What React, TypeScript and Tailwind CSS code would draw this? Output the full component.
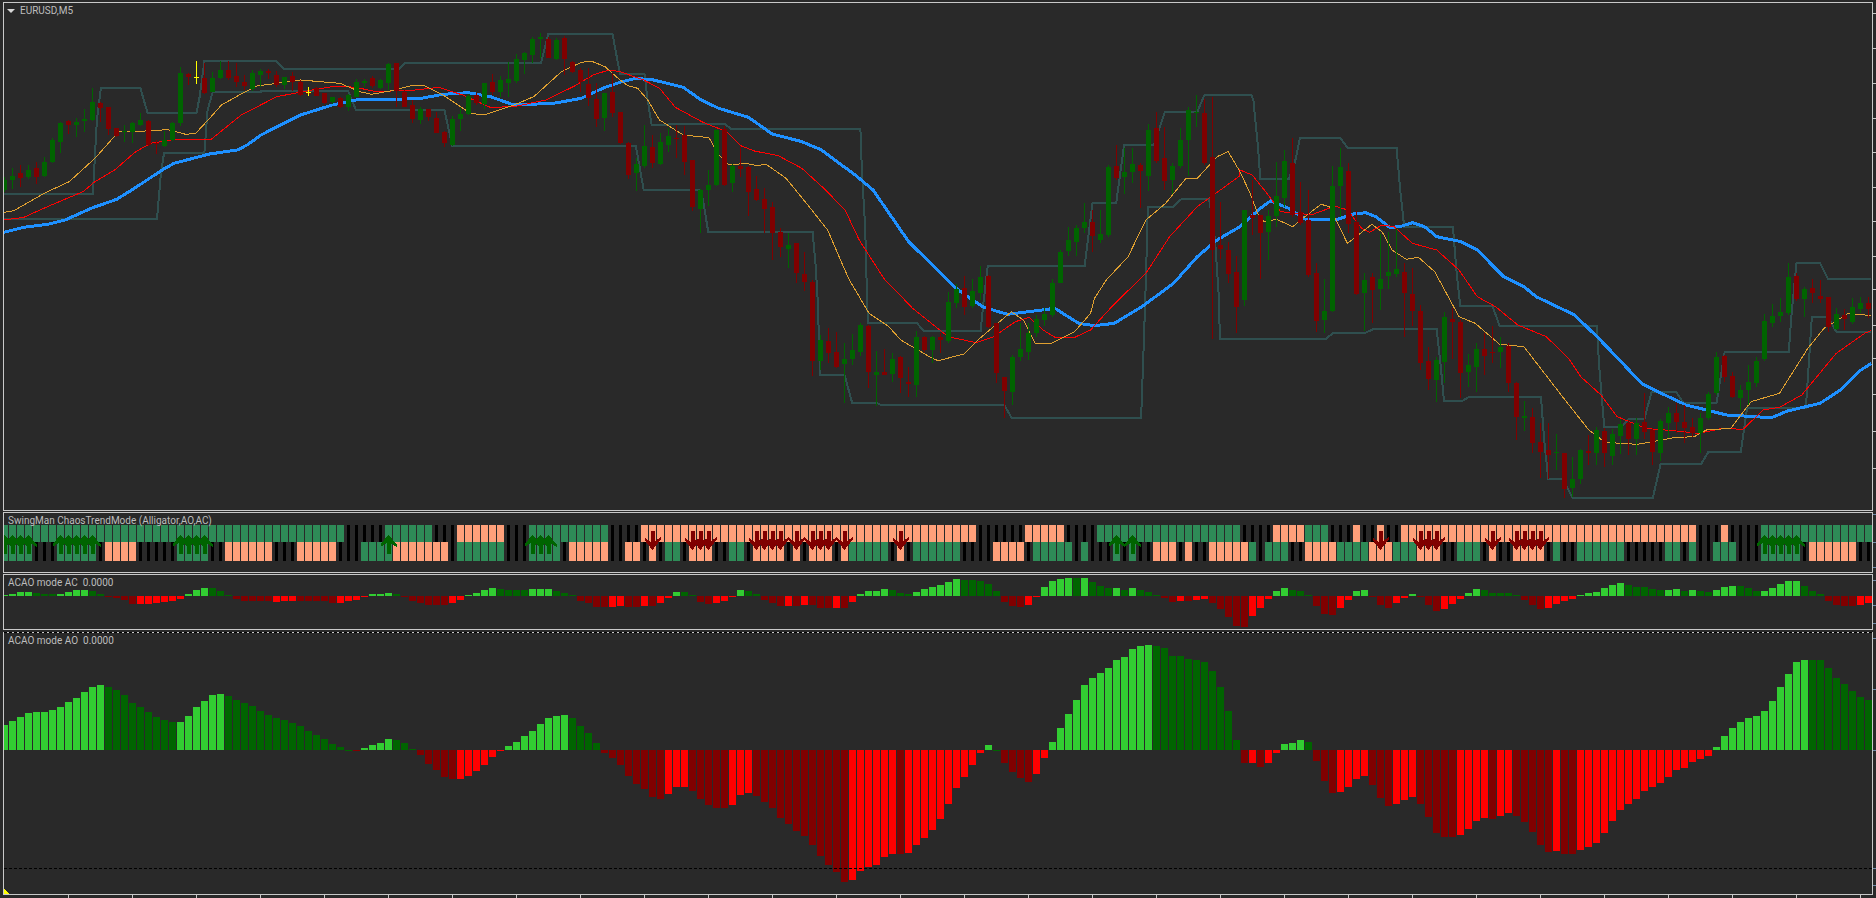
import type { ReactNode } from 'react';

type Pt = [number, number];

const COLORS: Record<string, string> = {
  L: '#32cd32',
  D: '#006400',
  R: '#ff0000',
  M: '#800000',
  G: '#006400',
  g: '#2e8b57',
  s: '#ffa07a',
  k: '#000000',
};

// Zoomed chart points back to page pixels (y values are page y * 3)
const mapA = (pts: Pt[]) => pts.map(([x, y]) => `${x * 0.3954},${y / 3}`);
const mapB = (pts: Pt[]) => pts.map(([x, y]) => `${620 + x * 0.3954},${y / 3}`);
const mapC = (pts: Pt[]) => pts.map(([x, y]) => `${1240 + x * 0.4056},${(y + 300) / 3}`);
const line = (a: Pt[], b: Pt[], c: Pt[]) => [...mapA(a), ...mapB(b), ...mapC(c)].join(' ');

const channelUpper = line(
  [[10, 581], [235, 581], [240, 470], [245, 360], [255, 264], [355, 264], [373, 338], [497, 338], [505, 290], [517, 183], [698, 183], [718, 207], [1010, 207], [1025, 189], [1368, 189], [1387, 101], [1549, 101]],
  [[0, 223], [62, 223], [70, 300], [80, 375], [165, 372], [265, 372], [280, 386], [608, 386], [612, 520], [620, 680], [625, 900], [627, 968], [750, 968], [768, 993], [912, 993], [920, 900], [930, 798], [1175, 798], [1195, 608], [1255, 608], [1275, 435], [1350, 435], [1378, 336], [1460, 336], [1478, 285], [1568, 285]],
  [[28, -15], [33, 0], [45, 150], [50, 237], [120, 237], [135, 190], [148, 113], [247, 113], [265, 143], [386, 143], [395, 270], [405, 382], [525, 382], [535, 530], [543, 617], [622, 617], [640, 677], [880, 677], [885, 790], [898, 980], [940, 980], [958, 957], [997, 957], [1015, 875], [1075, 875], [1093, 908], [1175, 908], [1195, 755], [1353, 755], [1360, 640], [1372, 489], [1430, 489], [1450, 537], [1556, 537]],
);

const channelLower = line(
  [[10, 657], [397, 657], [407, 520], [415, 458], [517, 458], [525, 330], [538, 276], [660, 276], [660, 272], [880, 272], [890, 300], [900, 330], [1124, 330], [1135, 390], [1144, 437]],
  [[0, 437], [40, 437], [60, 570], [200, 570], [210, 600], [223, 695], [487, 695], [495, 800], [500, 900], [505, 1080], [505, 1125], [568, 1125], [587, 1208], [648, 1208], [660, 1215], [972, 1215], [990, 1253], [1318, 1253], [1325, 1020], [1330, 840], [1335, 620], [1400, 620], [1420, 597], [1490, 597], [1505, 720], [1515, 900], [1517, 1018], [1568, 1018]],
  [[0, 717], [212, 717], [230, 698], [310, 698], [328, 688], [485, 688], [495, 800], [503, 903], [548, 903], [566, 890], [742, 890], [750, 1020], [760, 1137], [795, 1137], [820, 1193], [1018, 1193], [1037, 1092], [1137, 1092], [1155, 1055], [1235, 1055], [1250, 925], [1395, 925], [1410, 650], [1450, 650], [1470, 695], [1556, 695]],
);

const maBlue = line(
  [[10, 697], [60, 682], [120, 673], [165, 660], [230, 625], [295, 598], [340, 565], [410, 510], [440, 490], [530, 462], [600, 450], [625, 435], [660, 405], [760, 345], [840, 315], [900, 300], [1060, 296], [1120, 283], [1185, 278], [1240, 290], [1300, 315], [1400, 310], [1470, 295], [1530, 262]],
  [[0, 247], [40, 235], [85, 240], [160, 262], [205, 300], [250, 325], [325, 352], [385, 402], [460, 425], [510, 450], [600, 530], [640, 570], [730, 725], [850, 865], [880, 890], [920, 922], [980, 943], [1100, 925], [1160, 970], [1200, 977], [1250, 970], [1320, 920], [1400, 850], [1460, 770], [1510, 720], [1568, 680]],
  [[50, 325], [75, 303], [120, 325], [160, 357], [235, 360], [280, 342], [310, 338], [335, 350], [370, 383], [400, 378], [425, 368], [455, 380], [485, 410], [545, 425], [585, 450], [650, 530], [700, 560], [730, 590], [825, 645], [880, 710], [920, 760], [990, 850], [1030, 875], [1100, 915], [1200, 945], [1310, 953], [1350, 933], [1430, 910], [1480, 870], [1525, 815], [1556, 790]],
);

const maRed = line(
  [[10, 660], [60, 652], [120, 620], [210, 575], [240, 545], [290, 510], [340, 458], [380, 430], [450, 417], [535, 417], [610, 345], [700, 290], [780, 272], [850, 258], [900, 262], [950, 275], [1050, 270], [1110, 262], [1170, 285], [1240, 322], [1300, 320], [1380, 300], [1450, 260], [1500, 225], [1540, 210]],
  [[0, 215], [60, 240], [100, 265], [140, 322], [210, 367], [270, 395], [305, 437], [340, 453], [400, 467], [460, 505], [520, 570], [570, 632], [605, 720], [670, 840], [700, 875], [740, 925], [830, 1010], [900, 1028], [945, 1010], [1000, 965], [1035, 952], [1070, 990], [1100, 1012], [1150, 1012], [1190, 990], [1240, 925], [1265, 895], [1330, 820], [1390, 710], [1460, 620], [1530, 560], [1568, 527]],
  [[0, 210], [30, 225], [60, 270], [100, 335], [145, 340], [175, 345], [235, 318], [265, 330], [300, 385], [320, 397], [350, 375], [380, 380], [425, 430], [485, 450], [540, 510], [585, 590], [630, 620], [685, 675], [755, 710], [810, 775], [840, 830], [890, 885], [930, 950], [1000, 985], [1075, 993], [1130, 1000], [1190, 985], [1240, 988], [1290, 930], [1330, 922], [1385, 885], [1470, 760], [1540, 700], [1556, 692]],
);

const maOrange = line(
  [[10, 637], [35, 632], [115, 578], [175, 545], [240, 475], [300, 395], [400, 392], [420, 388], [470, 403], [495, 400], [530, 355], [560, 315], [610, 282], [650, 258], [700, 250], [760, 240], [860, 250], [910, 275], [940, 283], [990, 272], [1040, 257], [1075, 258], [1120, 285], [1190, 340], [1225, 345], [1300, 315], [1350, 290], [1420, 215], [1470, 187], [1495, 183], [1530, 200]],
  [[0, 240], [20, 257], [45, 265], [70, 300], [100, 360], [160, 405], [225, 413], [250, 465], [275, 495], [320, 490], [345, 497], [370, 493], [420, 535], [475, 615], [525, 690], [565, 800], [580, 840], [630, 940], [680, 980], [710, 1020], [790, 1075], [805, 1082], [870, 1062], [910, 1015], [990, 935], [1020, 960], [1050, 1030], [1090, 1030], [1150, 995], [1190, 940], [1200, 895], [1230, 840], [1285, 770], [1330, 660], [1380, 610], [1430, 537], [1460, 535], [1510, 470], [1538, 455], [1568, 515]],
  [[25, 280], [45, 345], [60, 365], [90, 358], [130, 380], [160, 350], [200, 313], [220, 320], [265, 430], [325, 373], [350, 395], [375, 450], [410, 478], [440, 472], [480, 515], [540, 650], [580, 670], [640, 733], [700, 740], [795, 890], [860, 990], [900, 1027], [980, 1033], [1070, 1013], [1120, 1010], [1150, 990], [1210, 985], [1260, 905], [1330, 880], [1400, 745], [1440, 685], [1500, 640], [1556, 647]],
);

// colour, body top, body bottom, wick top, wick bottom (page y * 3)
const candles: [string, number, number, number, number][] = [
  ['G', 540, 570, 530, 575], ['G', 528, 540, 505, 568], ['M', 520, 535, 495, 560], ['G', 510, 532, 495, 537],
  ['M', 503, 532, 485, 552], ['G', 487, 528, 470, 530], ['G', 420, 485, 415, 490], ['G', 370, 425, 365, 460],
  ['M', 362, 375, 360, 403], ['G', 366, 375, 355, 410], ['G', 357, 362, 327, 395], ['G', 306, 360, 265, 362],
  ['M', 310, 323, 305, 365], ['M', 322, 388, 322, 405], ['M', 385, 408, 383, 412], ['G', 393, 396, 375, 425],
  ['G', 370, 395, 365, 430], ['G', 360, 375, 340, 378], ['M', 362, 435, 360, 438], ['M', 430, 433, 420, 462],
  ['G', 420, 437, 392, 440], ['G', 370, 420, 365, 422], ['G', 220, 370, 200, 378], ['M', 222, 232, 218, 255],
  ['M', 232, 234, 232, 234], ['M', 235, 280, 190, 282], ['G', 235, 275, 215, 277], ['G', 210, 235, 183, 238],
  ['M', 210, 235, 183, 240], ['M', 227, 245, 190, 262], ['M', 245, 258, 225, 270], ['G', 220, 268, 210, 272],
  ['G', 213, 225, 208, 262], ['M', 214, 218, 208, 238], ['M', 225, 255, 212, 260], ['G', 232, 255, 230, 268],
  ['M', 228, 245, 215, 272], ['M', 245, 285, 240, 288], ['M', 278, 280, 278, 280], ['M', 265, 288, 262, 288],
  ['M', 280, 310, 280, 312], ['G', 292, 305, 290, 312], ['M', 295, 320, 292, 325], ['G', 285, 320, 283, 332],
  ['G', 245, 290, 237, 292], ['G', 243, 249, 238, 262], ['M', 235, 257, 228, 265], ['G', 240, 265, 238, 268],
  ['G', 192, 248, 188, 270], ['M', 190, 272, 188, 320], ['M', 275, 320, 270, 322], ['M', 316, 358, 300, 370],
  ['G', 328, 360, 322, 372], ['M', 328, 352, 326, 362], ['M', 355, 398, 335, 400], ['M', 395, 430, 392, 440],
  ['G', 358, 435, 348, 438], ['G', 342, 358, 325, 392], ['G', 288, 342, 282, 345], ['M', 285, 310, 280, 315],
  ['G', 250, 312, 248, 328], ['M', 245, 275, 222, 285], ['G', 240, 275, 228, 292], ['G', 238, 248, 185, 290],
  ['G', 178, 243, 162, 248], ['G', 158, 180, 155, 222], ['G', 118, 165, 112, 190], ['G', 110, 116, 100, 175],
  ['M', 118, 173, 112, 175], ['G', 120, 177, 115, 180], ['M', 115, 177, 108, 225], ['M', 185, 215, 183, 218],
  ['M', 210, 245, 205, 275], ['M', 252, 295, 203, 318], ['M', 297, 357, 248, 382], ['G', 280, 353, 278, 392],
  ['M', 277, 340, 220, 352], ['M', 335, 430, 335, 432], ['M', 430, 525, 425, 538], ['G', 492, 518, 475, 572],
  ['G', 438, 497, 375, 505], ['M', 442, 490, 405, 505], ['G', 426, 492, 400, 495], ['G', 407, 435, 385, 455],
  ['M', 413, 417, 375, 475], ['M', 406, 485, 378, 525], ['M', 480, 620, 480, 632], ['G', 570, 627, 568, 700],
  ['G', 556, 570, 510, 618], ['G', 390, 555, 388, 558], ['M', 388, 555, 378, 558], ['G', 497, 548, 492, 575],
  ['M', 498, 507, 440, 530], ['M', 500, 575, 498, 648], ['M', 568, 600, 528, 602], ['M', 598, 628, 565, 698],
  ['M', 622, 700, 605, 780], ['M', 697, 742, 685, 770], ['G', 735, 747, 700, 805], ['M', 730, 820, 728, 848],
  ['M', 822, 845, 755, 872], ['M', 845, 1083, 840, 1128], ['G', 1020, 1083, 1005, 1110], ['M', 1023, 1060, 985, 1090],
  ['M', 1055, 1100, 995, 1105], ['G', 1077, 1092, 1030, 1210], ['G', 1050, 1077, 1003, 1095], ['G', 975, 1055, 970, 1068],
  ['M', 978, 1115, 975, 1165], ['G', 1117, 1125, 1053, 1218], ['M', 1115, 1125, 1048, 1125], ['G', 1077, 1122, 1060, 1145],
  ['M', 1072, 1135, 1068, 1180], ['M', 1145, 1152, 1102, 1190], ['G', 1012, 1155, 993, 1190], ['M', 1010, 1050, 1008, 1055],
  ['G', 1010, 1050, 1008, 1088], ['M', 1012, 1020, 1000, 1060], ['G', 906, 1022, 876, 1030], ['G', 868, 910, 853, 925],
  ['M', 865, 920, 828, 945], ['G', 872, 918, 838, 925], ['G', 832, 880, 798, 900], ['M', 828, 980, 825, 985],
  ['M', 970, 1120, 970, 1150], ['M', 1132, 1172, 1130, 1255], ['G', 1072, 1175, 1065, 1215], ['G', 1048, 1070, 970, 1082],
  ['G', 1000, 1055, 968, 1080], ['G', 958, 1000, 945, 1010], ['G', 942, 960, 925, 978], ['G', 850, 945, 838, 950],
  ['G', 755, 850, 750, 842], ['G', 720, 752, 680, 768], ['G', 683, 725, 675, 768], ['G', 666, 683, 610, 700],
  ['M', 666, 707, 630, 757], ['G', 702, 720, 630, 730], ['G', 500, 705, 495, 710], ['M', 498, 535, 435, 540],
  ['G', 516, 530, 445, 582], ['G', 492, 515, 445, 548], ['M', 496, 514, 490, 625], ['G', 390, 527, 372, 572],
  ['M', 383, 484, 335, 490], ['M', 474, 543, 380, 570], ['G', 498, 540, 490, 583], ['G', 420, 498, 385, 505],
  ['G', 330, 420, 322, 528], ['G', 335, 338, 285, 380], ['M', 340, 490, 298, 495], ['M', 472, 750, 290, 1018],
  ['M', 735, 747, 605, 778], ['M', 750, 822, 725, 850], ['M', 815, 920, 768, 1000],
  ['G', 630, 900, 630, 917], ['M', 645, 655, 540, 705], ['M', 645, 700, 645, 838], ['G', 648, 695, 630, 780],
  ['G', 588, 648, 485, 680], ['G', 483, 593, 450, 620], ['M', 490, 645, 413, 652], ['M', 635, 670, 545, 675],
  ['M', 660, 825, 570, 830], ['M', 820, 962, 788, 995], ['G', 932, 960, 838, 1000], ['G', 558, 932, 498, 935],
  ['G', 502, 558, 445, 650], ['M', 512, 672, 490, 700], ['M', 665, 882, 632, 885], ['G', 840, 878, 820, 992],
  ['M', 832, 870, 818, 970], ['G', 838, 867, 703, 930], ['G', 816, 827, 695, 868], ['G', 807, 822, 685, 832],
  ['M', 815, 878, 790, 1010], ['M', 882, 932, 805, 978], ['M', 932, 1088, 915, 1110], ['M', 1082, 1138, 1042, 1170],
  ['G', 1080, 1140, 1070, 1205], ['G', 950, 1085, 935, 1148], ['M', 957, 965, 925, 1078], ['M', 965, 1120, 960, 1195],
  ['G', 1095, 1115, 1062, 1162], ['G', 1048, 1100, 1030, 1175], ['M', 1048, 1068, 998, 1125], ['M', 1055, 1060, 978, 1090],
  ['G', 1040, 1055, 1012, 1105], ['M', 1038, 1150, 1030, 1175], ['M', 1150, 1250, 1145, 1320], ['G', 1248, 1253, 1202, 1292],
  ['M', 1250, 1330, 1225, 1358], ['M', 1325, 1355, 1268, 1435], ['M', 1350, 1365, 1268, 1438], ['G', 1356, 1360, 1302, 1410],
  ['M', 1360, 1467, 1360, 1495], ['G', 1437, 1463, 1372, 1490], ['G', 1350, 1437, 1348, 1453], ['M', 1353, 1358, 1305, 1395],
  ['G', 1290, 1358, 1282, 1395], ['M', 1293, 1360, 1285, 1400], ['G', 1302, 1367, 1288, 1395], ['G', 1273, 1307, 1258, 1362],
  ['M', 1268, 1318, 1260, 1365], ['G', 1268, 1318, 1255, 1365], ['M', 1265, 1295, 1178, 1318], ['M', 1290, 1355, 1285, 1395],
  ['G', 1263, 1358, 1258, 1382], ['G', 1238, 1268, 1220, 1315], ['M', 1240, 1265, 1210, 1300], ['M', 1265, 1285, 1215, 1330],
  ['M', 1280, 1300, 1255, 1310], ['G', 1254, 1300, 1238, 1358], ['G', 1182, 1255, 1175, 1260], ['G', 1070, 1180, 1055, 1185],
  ['M', 1068, 1132, 1065, 1145], ['M', 1128, 1190, 1115, 1193], ['G', 1170, 1193, 1155, 1230], ['G', 1147, 1170, 1095, 1215],
  ['G', 1083, 1150, 1070, 1162], ['G', 963, 1076, 943, 1082], ['G', 948, 968, 912, 980], ['G', 936, 948, 895, 965],
  ['G', 832, 940, 790, 945], ['M', 827, 898, 820, 902], ['G', 868, 897, 860, 952], ['M', 863, 880, 838, 910],
  ['M', 887, 897, 840, 910], ['M', 892, 980, 890, 995], ['G', 942, 986, 925, 990], ['M', 944, 958, 928, 990],
  ['G', 922, 965, 895, 972], ['G', 910, 927, 890, 940], ['M', 910, 927, 890, 955],
];

// one entry per bar: colour letter + height in 3x pixels, negative is below the zero line
const acBars = 'L2 L6 L12 L12 D9 D7 D6 L6 L12 L18 L18 D15 D6 M-2 M-6 M-12 M-23 R-23 R-24 R-20 R-18 R-14 R-8 L6 L18 L24 D24 D15 D2 M-8 M-16 M-16 M-16 M-16 R-17 R-16 R-16 M-16 M-16 M-16 M-16 M-20 R-20 R-16 R-12 R-3 L6 L6 L9 D5 M-3 M-15 M-22 M-27 M-28 M-28 R-22 R-12 L2 L9 L18 L24 D22 D18 D18 D18 L21 L21 L21 D15 D9 D2 M-15 M-22 M-33 M-33 R-33 R-30 M-33 M-33 R-30 M-30 R-21 R-6 L12 D12 D1 M-18 M-24 R-21 R-15 R-2 L18 D15 D6 M-12 M-21 M-30 R-30 M-30 R-27 M-27 M-36 M-36 R-36 M-36 R-18 L6 L15 L15 L21 D18 D9 D6 L12 L21 L27 L33 L42 L51 D48 D48 D45 D36 D15 M-18 M-30 M-33 R-27 R-3 L27 L45 L51 L54 D54 L54 D42 D30 D24 L24 D18 L24 D18 D12 D2 M-6 M-18 R-15 M-15 R-12 R-9 M-21 M-39 M-63 M-90 M-93 R-60 R-36 R-9 L15 L24 D18 D15 D1 M-30 M-54 M-57 R-36 R-12 L15 L18 M-3 M-27 M-36 R-21 R-5 L6 M-3 M-27 M-45 R-39 R-24 R-9 L9 L21 D18 D9 D9 D9 D1 M-12 M-27 M-39 R-36 R-24 R-15 R-9 L3 L9 L12 L24 L33 L39 D33 D27 D27 D21 D18 L18 L21 D15 L18 D15 D12 L18 L27 L30 D30 D24 D15 L15 L24 L36 L45 L45 D30 D15 D6 M-15 M-27 M-30 M-30 R-27 R-21'.split(' ');

const aoBars = 'L75 L87 L99 L111 L114 L114 L120 L129 L144 L156 L174 L189 L195 D189 D180 D165 D141 D129 D114 D99 D90 D84 L84 L102 L129 L147 L165 L168 D162 D150 D141 D132 D117 D105 D96 D90 D81 D72 D57 D45 D33 D18 D9 D-2 M-2 L6 L15 L21 L33 D30 D21 D2 M-15 M-42 M-60 M-81 M-87 R-87 R-78 R-63 R-45 R-21 R-3 L12 L24 L42 L57 L78 L96 L102 L105 D96 D72 D51 D21 M-9 M-24 M-45 M-78 M-102 M-117 M-141 M-147 R-132 R-111 R-111 M-123 M-147 M-165 M-173 M-173 R-165 R-135 R-129 M-138 M-156 M-173 M-203 M-222 M-243 M-258 M-285 M-318 M-345 M-365 M-395 R-390 R-363 R-351 R-345 R-321 R-312 M-312 R-309 R-285 R-264 R-240 R-207 R-162 R-114 R-81 R-45 R-9 L15 D-2 M-39 M-66 M-84 M-96 R-72 R-24 L24 L66 L108 L150 L195 L216 L231 L246 L270 L279 L303 L312 L315 D312 D306 D282 D282 D273 D270 D264 D237 D189 D117 D30 M-39 R-39 M-51 R-39 R-9 L18 L21 L30 D24 M-33 M-93 M-129 R-126 R-111 R-87 R-78 M-105 M-143 M-168 R-162 R-150 R-141 M-162 M-201 M-249 M-261 M-261 R-255 R-237 R-213 R-204 M-207 R-198 R-189 M-198 M-215 M-246 M-285 M-305 R-303 M-311 M-311 R-300 R-291 R-279 R-249 R-213 R-180 R-162 R-147 R-123 R-111 R-99 R-81 R-60 R-54 R-36 R-27 R-18 L9 L42 L66 L84 L96 L102 L117 L147 L189 L228 L264 L270 D270 D270 D246 D216 D198 D177 D159 D150'.split(' ');

// swing mode rows as runs of colour letter + bar count
const swingTop = 'g43 k5 g6 k3 s6 k3 g10 k4 s42 k6 s5 k4 g18 k4 s4 g3 k3 s1 k2 s1 k2 s37 k3 s1 k4 g14';
const swingBottom = 'g4 k3 g5 k1 s4 k5 g4 k2 s6 k3 s5 k3 g4 s7 k1 g6 k3 g4 k1 s5 k2 s2 k1 s1 k1 g2 k1 s3 k2 g2 k1 s4 k1 s1 k1 s3 k1 s1 g5 k1 s1 k1 g6 k4 s4 k1 g5 k1 g1 k3 g1 k1 g1 k2 s3 k1 s1 k2 s5 g1 k1 g3 k2 s4 g4 s3 g3 s3 k2 g3 k1 s1 k2 s4 k1 g1 k2 g6 k5 g2 k1 g1 k2 g3 k3 g5 k1 s6 k2';

const expandRuns = (runs: string) =>
  runs.split(' ').flatMap((r) => Array<string>(Number(r.slice(1))).fill(r[0]));

const upArrows = [0, 1, 2, 3, 7, 8, 9, 10, 11, 22, 23, 24, 25, 48, 66, 67, 68, 139, 141, 220, 221, 222, 223, 224];
const downArrows = [81, 86, 87, 88, 94, 95, 96, 97, 99, 101, 102, 103, 105, 112, 172, 177, 178, 179, 186, 189, 190, 191, 192];

const priceTicks = [13, 48, 83, 118, 152, 187, 221, 256, 289, 325, 358, 394, 431, 468, 514, 542, 567, 580, 605, 623, 638, 689, 750, 868, 885];
const timeTicks = Array.from({ length: 29 }, (_, i) => i);

const barX = (i: number) => 1 + 8 * i;
const centerX = (i: number) => 4.5 + 8 * i;

function Pane({
  top,
  height,
  label,
  dashedTop,
  children,
}: {
  top: number;
  height: number;
  label: ReactNode;
  dashedTop?: boolean;
  children: ReactNode;
}) {
  return (
    <div className="relative border border-[#c8c8c8]" style={{ height: height + 2 }}>
      {dashedTop && (
        <div className="absolute inset-x-0 -top-px h-px bg-[repeating-linear-gradient(90deg,#000_0_3px,#c8c8c8_3px_5px)]" />
      )}
      <svg className="block" width={1868} height={height} viewBox={`4 ${top} 1868 ${height}`} shapeRendering="crispEdges">
        {children}
      </svg>
      <div className="absolute left-[3px] top-0 flex h-[15px] items-center gap-[5px] text-[10px] leading-none text-[#bdbdbd]">
        {label}
      </div>
    </div>
  );
}

function Histogram({ bars, zero }: { bars: string[]; zero: number }) {
  return (
    <>
      {bars.map((b, i) => {
        const v = Number(b.slice(1)) / 3;
        const h = Math.max(Math.abs(v), 1);
        return <rect key={i} x={barX(i)} y={v > 0 ? zero - h : zero} width={7} height={h} fill={COLORS[b[0]]} />;
      })}
    </>
  );
}

function SwingRow({ states, y, h }: { states: string[]; y: number; h: number }) {
  return (
    <>
      {states.map((s, i) => (
        <rect
          key={i}
          x={s === 'k' ? barX(i) + 2 : barX(i)}
          y={y}
          width={s === 'k' ? 3 : 7}
          height={h}
          fill={COLORS[s]}
        />
      ))}
    </>
  );
}

function Candles() {
  return (
    <>
      {candles.map(([c, top, bottom, high, low], i) => {
        const y = Math.round(top / 3);
        const by = Math.max(Math.round(bottom / 3) - y, 1);
        const hy = Math.round(high / 3);
        return (
          <g key={i} fill={COLORS[c]}>
            <rect x={4 + 8 * i} y={hy} width={1} height={Math.max(Math.round(low / 3) - hy, 1)} />
            <rect x={2 + 8 * i} y={y} width={5} height={by} />
          </g>
        );
      })}
    </>
  );
}

function Cross({ x, top, bottom, bar }: { x: number; top: number; bottom: number; bar: number }) {
  return (
    <g fill="#ffff00">
      <rect x={x} y={top} width={1} height={bottom - top} />
      <rect x={x - 2} y={bar} width={5} height={1} />
    </g>
  );
}

export default function App() {
  return (
    <div className="flex h-[898px] w-[1876px] overflow-hidden bg-[#292929] pl-[3px] font-['Roboto',sans-serif]">
      <div className="flex w-[1870px] flex-col gap-px pt-[2px]">
        <Pane
          top={3}
          height={507}
          label={
            <>
              <svg width={8} height={4} viewBox="0 0 8 4">
                <path d="M0 0H8L4 4Z" fill="#d8d8d8" />
              </svg>
              <span>EURUSD,M5</span>
            </>
          }
        >
          <polyline points={channelUpper} fill="none" stroke="#2f4f4f" strokeWidth={2} />
          <polyline points={channelLower} fill="none" stroke="#2f4f4f" strokeWidth={2} />
          <polyline points={maBlue} fill="none" stroke="#1e90ff" strokeWidth={3} />
          <polyline points={maRed} fill="none" stroke="#ff0000" strokeWidth={1} />
          <polyline points={maOrange} fill="none" stroke="#e0a030" strokeWidth={1} />
          <Candles />
          <Cross x={196} top={61} bottom={84} bar={77} />
          <Cross x={308} top={87} bottom={96} bar={92} />
        </Pane>

        <Pane top={513} height={59} label={<span className="pl-[1px]">SwingMan ChaosTrendMode (Alligator,AO,AC)</span>}>
          <SwingRow states={expandRuns(swingTop)} y={525} h={17} />
          <SwingRow states={expandRuns(swingBottom)} y={542} h={19} />
          {upArrows.map((i) => (
            <polygon
              key={i}
              transform={`translate(${centerX(i)} 0)`}
              points="0,535 8,544 8,547 2,543 2,554 -2,554 -2,543 -8,547 -8,544"
              fill="#006400"
            />
          ))}
          {downArrows.map((i) => (
            <polygon
              key={i}
              transform={`translate(${centerX(i)} 0)`}
              points="-2,531 2,531 2,542 8,537 8,540 0,550 -8,540 -8,537 -2,542"
              fill="#800000"
            />
          ))}
        </Pane>

        <Pane top={575} height={54} label={<span className="whitespace-pre pl-[1px]">ACAO mode AC  0.0000</span>}>
          <Histogram bars={acBars} zero={596} />
        </Pane>

        <div className="mt-px">
          <Pane dashedTop top={633} height={261} label={<span className="whitespace-pre pl-[1px]">ACAO mode AO  0.0000</span>}>
            <Histogram bars={aoBars} zero={750} />
            <line x1={4} x2={1872} y1={868.5} y2={868.5} stroke="#000000" strokeDasharray="3 2" />
            <polygon points="4,889 9,894 4,894" fill="#ffff00" />
          </Pane>
        </div>

        <div className="-mt-px flex h-[3px] gap-[63px] pl-[65px]">
          {timeTicks.map((t) => (
            <span key={t} className="h-full w-px shrink-0 bg-[#c8c8c8]" />
          ))}
        </div>
      </div>

      <svg width={3} height={898} className="shrink-0" shapeRendering="crispEdges">
        {priceTicks.map((y) => (
          <rect key={y} x={0} y={y} width={3} height={1} fill={y > 510 ? '#6f8aa8' : '#c8c8c8'} />
        ))}
      </svg>
    </div>
  );
}
